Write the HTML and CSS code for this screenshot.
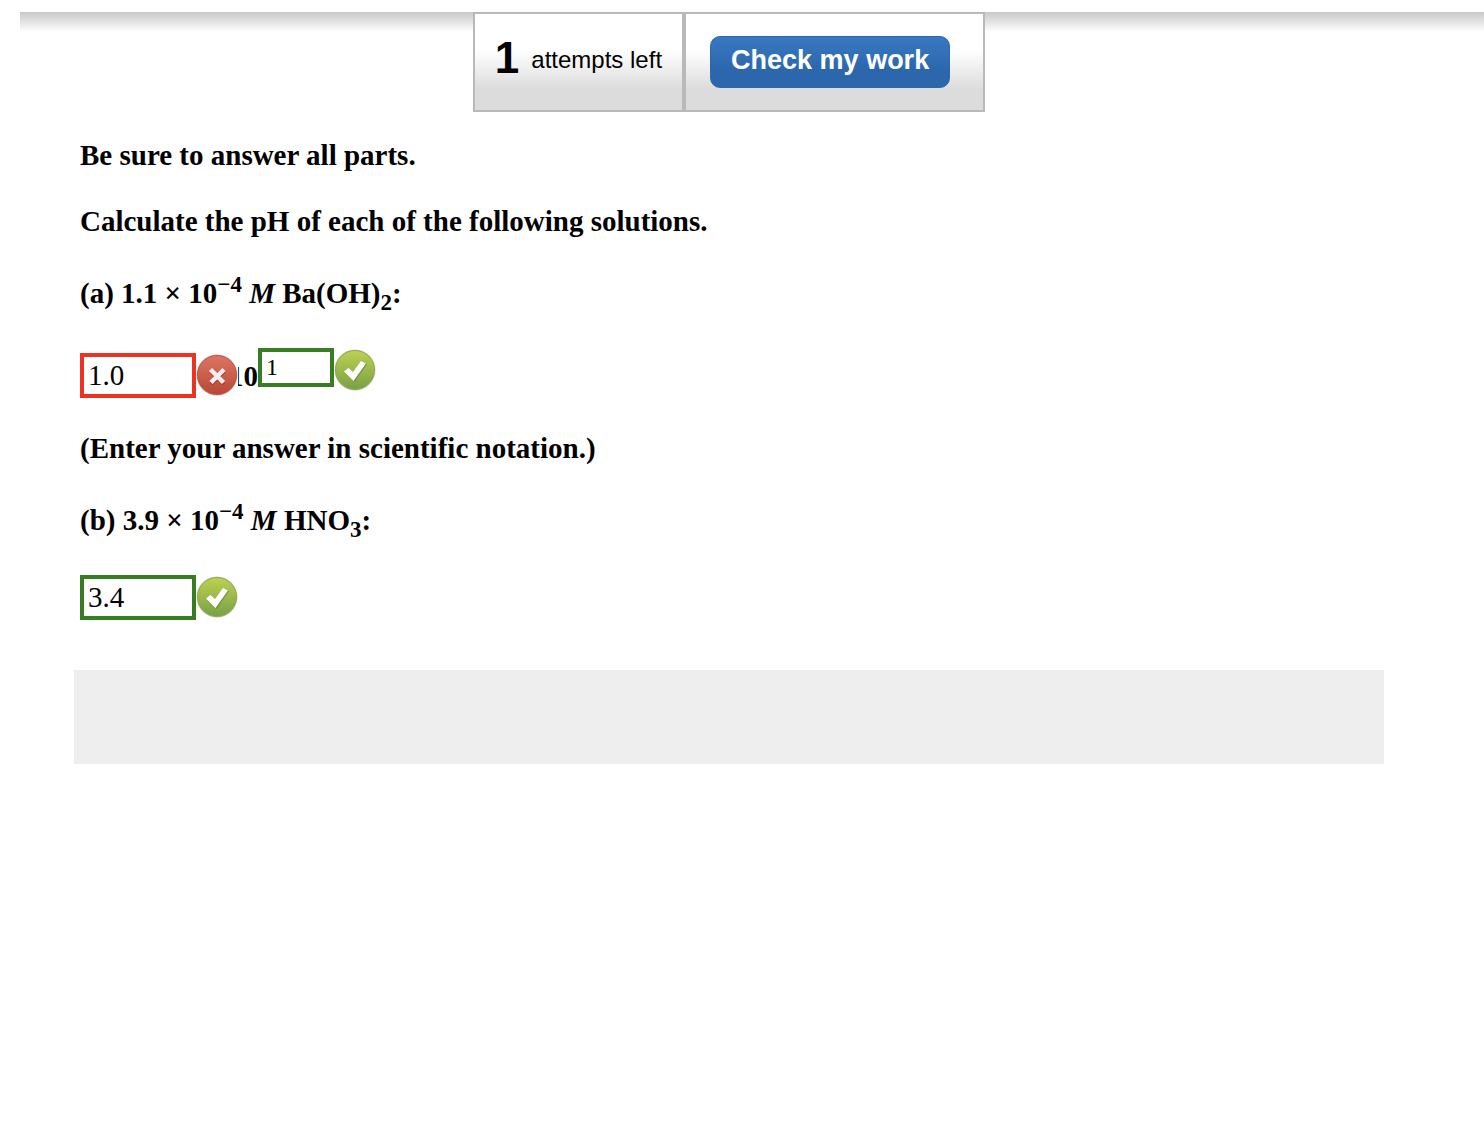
FILE: index.html
```html
<!DOCTYPE html>
<html lang="en">
<head>
    <meta charset="UTF-8">
    <meta name="viewport" content="width=device-width, initial-scale=1.0">
    <title>Question</title>
    <link rel="stylesheet" href="styles.css">
</head>
<body>
    <!-- gradients shared by the result badges -->
    <svg class="defs" width="0" height="0" aria-hidden="true">
        <defs>
            <linearGradient id="wrongFill" x1="0" y1="0" x2="0" y2="1">
                <stop offset="0" stop-color="#dc7664"/>
                <stop offset="1" stop-color="#b94736"/>
            </linearGradient>
            <linearGradient id="rightFill" x1="0" y1="0" x2="0" y2="1">
                <stop offset="0" stop-color="#bdd151"/>
                <stop offset="1" stop-color="#79a046"/>
            </linearGradient>
            <symbol id="wrong" viewBox="0 0 42 42">
                <circle cx="21" cy="21" r="20.5" fill="#d9aaa2"/>
                <circle cx="21" cy="21" r="19.5" fill="url(#wrongFill)" stroke="#bd5546" stroke-width="1"/>
                <path d="M15 17l13 13M28 17l-13 13" fill="none" stroke="#a83f30" stroke-width="4.5"/>
                <path d="M14.5 15.5l13 13M28 15.500l-13 13" fill="none" stroke="#f7efed" stroke-width="4.5"/>
            </symbol>
            <symbol id="right" viewBox="0 0 42 42">
                <circle cx="21" cy="21" r="20.5" fill="#c5cfac"/>
                <circle cx="21" cy="21" r="19.5" fill="url(#rightFill)" stroke="#8fa957" stroke-width="1"/>
                <path d="M11 24l4-4 5 4 8-11 5 2-12.500 18z" fill="#6f923c"/>
                <path d="M10 22.500l4.500-3.500 4.500 4 8-11 5 2.500-12.500 17.500z" fill="#fff"/>
            </symbol>
        </defs>
    </svg>

    <div class="top-shadow">
        <div class="toolbar">
            <div class="toolbar-cell attempts">
                <span class="attempts-count">1</span>
                <span class="attempts-label">attempts left</span>
            </div>
            <div class="toolbar-cell actions">
                <button class="check-button" type="button">Check my work</button>
            </div>
        </div>
    </div>

    <div class="content">
        <div class="question">
            <p>Be sure to answer all parts.</p>
            <p>Calculate the pH of each of the following solutions.</p>
            <p class="part" id="partA">(a) 1.1 × 10<sup>−4</sup> <i>M</i> Ba(OH)<sub>2</sub>:</p>

            <div class="answer-row">
                <div class="answer mantissa">
                    <input class="answer-input incorrect" type="text" value="1.0" aria-labelledby="partA">
                    <svg class="badge" role="img" aria-label="incorrect"><use href="#wrong"/></svg>
                </div>
                <label class="power-base" for="exponent">10</label>
                <div class="answer exponent">
                    <input class="answer-input correct" id="exponent" type="text" value="1">
                    <svg class="badge" role="img" aria-label="correct"><use href="#right"/></svg>
                </div>
            </div>

            <p>(Enter your answer in scientific notation.)</p>
            <p class="part" id="partB">(b) 3.9 × 10<sup>−4</sup> <i>M</i> HNO<sub>3</sub>:</p>

            <div class="answer-row">
                <div class="answer">
                    <input class="answer-input correct" type="text" value="3.4" aria-labelledby="partB">
                    <svg class="badge" role="img" aria-label="correct"><use href="#right"/></svg>
                </div>
            </div>
        </div>

        <div class="footer-bar"></div>
    </div>
</body>
</html>
```
FILE: styles.css
```css
body {
    margin: 0;
    padding: 12px 0 0 20px;
    background: #fff;
    color: #000;
    font-family: 'Liberation Serif', 'Times New Roman', serif;
    font-size: 29px;
    line-height: 32px;
}

.defs {
    position: absolute;
}

/* Toolbar */
.top-shadow {
    display: flex;
    justify-content: center;
    padding: 0 100px 0 54px;
    background: linear-gradient(#c8c8c8, #fff) no-repeat;
    background-size: 100% 20px;
    font-family: 'Liberation Sans', Arial, sans-serif;
}

.toolbar {
    display: flex;
    height: 100px;
}

.toolbar-cell {
    display: flex;
    align-items: center;
    box-sizing: border-box;
    border: 2px solid #b9b9b9;
    background: linear-gradient(#fff 38%, #dcdcdc 78%);
}

.attempts {
    gap: 12px;
    padding: 0 20px 4px;
}

.attempts-count {
    padding-bottom: 4px;
    font-size: 44px;
    font-weight: bold;
}

.attempts-label {
    font-size: 24px;
}

.actions {
    padding: 0 33px 0 24px;
}

.check-button {
    height: 52px;
    padding: 0 20px 4px;
    border: 1px solid #2b68ad;
    border-radius: 10px;
    background: linear-gradient(#3878c2, #2c67ad 65%);
    color: #fff;
    font-family: inherit;
    font-size: 27px;
    font-weight: bold;
    cursor: pointer;
}

/* Question */
.content {
    margin: 27px 100px 0 54px;
}

.question {
    padding: 0 6px;
    font-weight: bold;
}

.question p {
    margin: 0 0 34px;
}

.question .part {
    margin: 40px 0 39px;
}

sup,
sub {
    font-size: 23px;
    line-height: 0;
}

.answer-row {
    display: flex;
    align-items: flex-start;
    margin-bottom: 34px;
}

.answer {
    display: flex;
    align-items: flex-start;
}

.mantissa {
    margin-top: 5px;
}

.answer-input {
    box-sizing: border-box;
    width: 116px;
    height: 45px;
    padding: 0 4px;
    border: 4px solid #377e22;
    background: #fff;
    color: #000;
    font-family: inherit;
    font-size: 29px;
}

.answer-input.incorrect {
    border-color: #eb3223;
}

.exponent .answer-input {
    width: 76px;
    height: 39px;
    font-size: 24px;
}

.badge {
    position: relative;
    width: 42px;
    height: 42px;
    margin-top: 1px;
    background: #fff;
}

/* the badge covers the start of the power */
.power-base {
    margin: 12px 0 0 -9px;
}

.footer-bar {
    height: 94px;
    margin-top: 50px;
    background: #eee;
}
```
